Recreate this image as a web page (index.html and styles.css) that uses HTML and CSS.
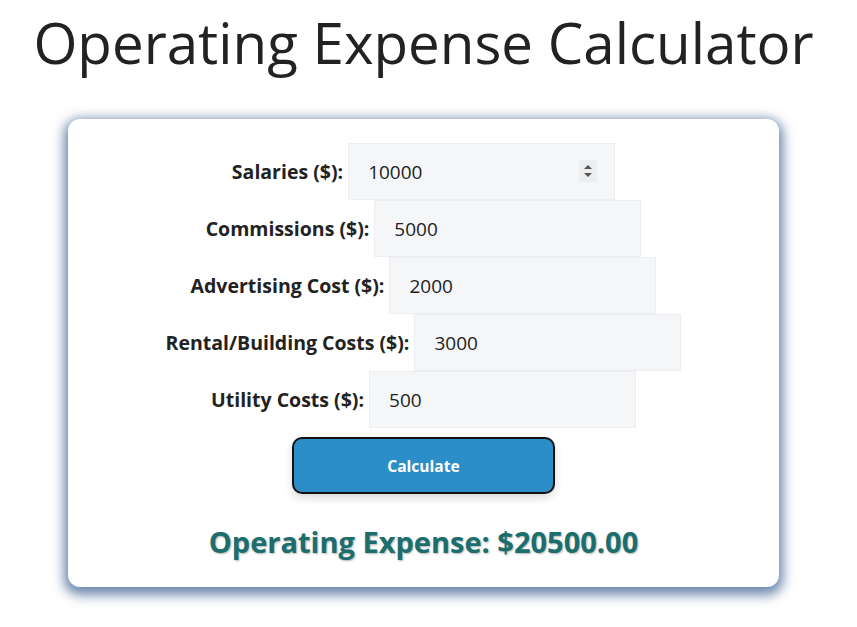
FILE: index.html
```html
<!DOCTYPE html>
<html lang="en">
<head>
    <meta charset="UTF-8">
    <meta name="viewport" content="width=device-width, initial-scale=1.0">
    <title>Operating Expense Calculator</title>
    <link rel="stylesheet" href="styles.css">
</head>
<body>
    <h1>Operating Expense Calculator</h1>
    <div class="calculator">
        <div class="row">
            <label for="salaries">Salaries ($):</label>
            <div class="field">
                <input type="number" id="salaries" value="10000">
                <span class="spinner">
                    <svg width="18" height="22" viewBox="0 0 18 22">
                        <path d="M5 9 L9 5 L13 9 Z" fill="#555"/>
                        <path d="M5 13 L9 17 L13 13 Z" fill="#555"/>
                    </svg>
                </span>
            </div>
        </div>
        <div class="row">
            <label for="commissions">Commissions ($):</label>
            <div class="field"><input type="number" id="commissions" value="5000"></div>
        </div>
        <div class="row">
            <label for="advertising">Advertising Cost ($):</label>
            <div class="field"><input type="number" id="advertising" value="2000"></div>
        </div>
        <div class="row">
            <label for="rental">Rental/Building Costs ($):</label>
            <div class="field"><input type="number" id="rental" value="3000"></div>
        </div>
        <div class="row">
            <label for="utility">Utility Costs ($):</label>
            <div class="field"><input type="number" id="utility" value="500"></div>
        </div>
        <button id="calculateButton">Calculate</button>
        <div id="result">Operating Expense: $20500.00</div>
    </div>
</body>
</html>
```

FILE: styles.css
```css
body {
    margin: 8px 18px 8px 8px;
    padding-bottom: 30px;
    background-color: #fff;
    font-family: "Open Sans", "Noto Sans", sans-serif;
    color: #222;
}

h1 {
    text-align: center;
    font-size: 56.5px;
    font-weight: 400;
    margin: 0 0 41px;
    line-height: 70px;
    color: #222;
}

.calculator {
    width: 711px;
    box-sizing: border-box;
    margin: 0 auto;
    padding: 24px 20px 26px;
    background-color: #fff;
    border-radius: 12px;
    box-shadow: 0 4px 12px 4px rgba(72, 106, 152, 0.8);
    display: flex;
    flex-direction: column;
    align-items: center;
}

.row {
    display: flex;
    justify-content: center;
    align-items: center;
    gap: 5px;
}

.row label {
    font-weight: 700;
    font-size: 19.5px;
    color: #222;
}

.field {
    position: relative;
}

.field input {
    width: 267px;
    height: 57px;
    box-sizing: border-box;
    padding: 0 19px;
    border: 1px solid #eceef1;
    background-color: #f5f6f8;
    font-family: inherit;
    font-size: 19px;
    color: #222;
    outline: none;
    -moz-appearance: textfield;
}

.field input::-webkit-outer-spin-button,
.field input::-webkit-inner-spin-button {
    -webkit-appearance: none;
    margin: 0;
}

.spinner {
    position: absolute;
    right: 18px;
    top: 17px;
    width: 18px;
    height: 22px;
    background-color: #eceef0;
}

.spinner svg {
    display: block;
}

button {
    margin-top: 9px;
    width: 263px;
    height: 57px;
    background-color: #2b8ec8;
    color: #fff;
    border: 2px solid #111;
    border-radius: 10px;
    font-family: inherit;
    font-weight: 700;
    font-size: 15.6px;
    cursor: pointer;
    box-shadow: 0 4px 8px rgba(0, 0, 0, 0.15);
}

#result {
    margin-top: 28px;
    font-size: 29px;
    font-weight: 700;
    color: #1a6e6e;
    text-shadow: 1px 1px 2px rgba(0, 0, 0, 0.3);
}
```
